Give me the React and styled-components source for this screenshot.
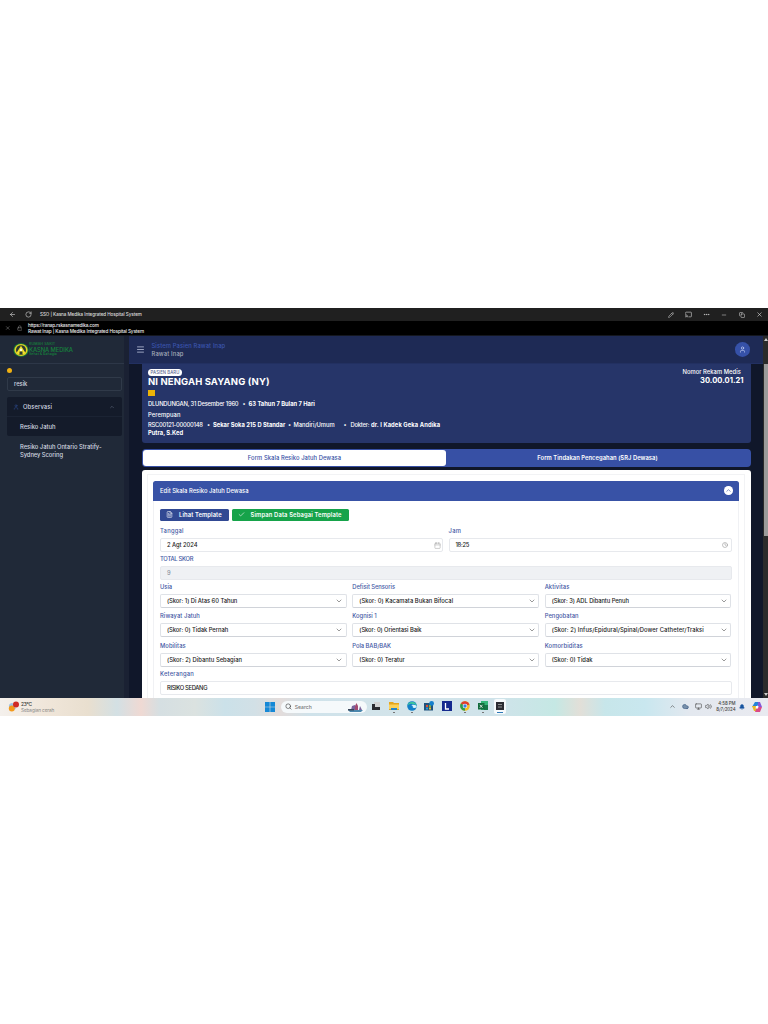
import React from 'react';
import styled, {createGlobalStyle} from "styled-components";
import {
    ArrowLeft, RotateCw, X, Lock, Pencil, Cast, Ellipsis, Minus, Copy, Menu, User, ChevronUp, ChevronDown,
    FileText, Check, Calendar, Clock, Search, Volume2, Monitor, Bell, Cloud
} from "lucide-react";

const GlobalStyle = createGlobalStyle`
* { box-sizing: border-box; }
body {
    margin: 0;
    background: #fff;
    font-family: Inter, "Open Sans", "Liberation Sans", sans-serif;
}
`
const Page = styled.div`
width: 768px;
height: 1024px;
padding-top: 308px;
overflow: hidden;
background: #fff;
`
/* one line of text, $s size, $ls tracking */
const Text = styled.span`
display: block;
flex: none;
white-space: nowrap;
font-size: ${p => p.$s || 5.8}px;
font-weight: ${p => p.$b || 500};
letter-spacing: ${p => p.$ls || 0}px;
line-height: ${p => p.$lh || 8}px;
color: ${p => p.$c || "inherit"};
width: ${p => p.$w ? p.$w + "px" : "auto"};
text-align: ${p => p.$right ? "right" : "left"};
`
const TitleBar = styled.div`
height: 13px;
background: #202020;
color: #ddd;
display: flex;
align-items: center;
justify-content: space-between;
padding-left: 9px;
`
const BarLeft = styled.div`
display: flex;
align-items: center;
gap: 8.5px;
`
const BarRight = styled.div`
display: flex;
align-items: center;
`
const BarSlot = styled.div`
width: 17.6px;
display: flex;
justify-content: center;
`
const UrlBar = styled.div`
height: 15px;
background: #000;
color: #eee;
display: flex;
align-items: center;
padding-left: 5px;
gap: 6px;
border-bottom: 1px solid #14171f;
`
const UrlIcons = styled.div`
display: flex;
gap: 6px;
width: 17px;
color: #999;
`
const AppArea = styled.div`
height: 362px;
display: flex;
background: #10172a;
overflow: hidden;
`
const Sidebar = styled.aside`
width: 129px;
background: #202938;
border-right: 5px solid #1a2133;
color: #d3d8e0;
`
const LogoBox = styled.div`
height: 28px;
display: flex;
align-items: center;
padding-left: 13px;
border-bottom: 1px solid #2d3748;
`
const SideBody = styled.div`
padding: 4px 2px 0 7px;
`
const Dot = styled.div`
width: 5px;
height: 5px;
border-radius: 50%;
background: #f0b012;
`
const SearchInput = styled.div`
height: 14px;
margin-top: 4px;
border: 1px solid #303a49;
border-radius: 2px;
display: flex;
align-items: center;
padding-left: 6px;
`
const MenuGroup = styled.div`
margin-top: 6px;
height: 39px;
border-radius: 2px;
background: #141b2a;
`
const MenuHead = styled.div`
height: 20px;
display: flex;
align-items: center;
padding: 0 7px 0 6px;
gap: 4px;
border-bottom: 1px solid #1b2333;
`
const MenuItem = styled.div`
height: 19px;
display: flex;
align-items: center;
padding-left: 13px;
`
const MenuPlain = styled.div`
padding: 7px 0 0 13px;
`
const Spacer = styled.div`
flex: 1;
`
const Main = styled.main`
width: 634px;
`
const Header = styled.header`
height: 28px;
background: #1e2a55;
display: flex;
align-items: center;
padding: 0 13px 0 6.5px;
gap: 7px;
border-bottom: 1px solid #223061;
`
const Avatar = styled.div`
width: 15.5px;
height: 15px;
border-radius: 50%;
background: #3651a8;
color: #dfe6ff;
display: flex;
align-items: center;
justify-content: center;
`
const Content = styled.div`
padding: 0 12.5px;
`
const Patient = styled.section`
height: 78.5px;
background: #263569;
border-radius: 0 0 3px 3px;
padding: 5px 7px 0 6.5px;
color: #fff;
display: flex;
justify-content: space-between;
`
const Pill = styled.div`
width: 34px;
height: 7px;
border-radius: 4px;
background: #fff;
display: flex;
align-items: center;
justify-content: center;
`
const YellowBox = styled.div`
width: 6.5px;
height: 6.5px;
margin: 1.5px 0 4px;
background: #eab308;
`
const Line = styled.div`
display: flex;
height: ${p => p.$h || 8}px;
`
const Numbers = styled.div`
display: flex;
flex-direction: column;
align-items: flex-end;
margin-top: -1px;
`
const Tabs = styled.div`
height: 18.5px;
margin-top: 6px;
padding: 1.5px;
border-radius: 4px;
background: #3750a5;
display: flex;
`
const Tab = styled.div`
flex: 1;
border-radius: 3px;
display: flex;
align-items: center;
justify-content: center;
background: ${p => p.$on ? "#fff" : "transparent"};
color: ${p => p.$on ? "#3750a5" : "#fff"};
`
const Card = styled.section`
margin-top: 3px;
height: 228px;
background: #fff;
border-radius: 3px 3px 0 0;
padding: 4px 5.5px 0;
`
const CardInner = styled.div`
height: 224px;
border: 1px solid #f2f3f5;
border-bottom: 0;
padding: 5.5px 5.5px 0 5px;
`
const PanelHead = styled.div`
height: 20px;
border-radius: 2.5px 2.5px 0 0;
background: #3852a6;
color: #fff;
display: flex;
align-items: center;
justify-content: space-between;
padding: 0 6px 0 7px;
`
const Round = styled.div`
width: 8.5px;
height: 8.5px;
border-radius: 50%;
background: #fff;
color: #3852a6;
display: flex;
align-items: center;
justify-content: center;
`
const PanelBody = styled.div`
height: 199px;
border: solid #f0f1f4;
border-width: 0 1px;
padding: 8px 6px 0;
`
const Buttons = styled.div`
display: flex;
gap: 3px;
`
const Button = styled.div`
width: ${p => p.$w}px;
height: 12.5px;
border-radius: 1.5px;
background: ${p => p.$bg};
color: #fff;
display: flex;
align-items: center;
padding-left: 6px;
gap: 6px;
`
const Row = styled.div`
display: flex;
gap: 5.5px;
padding-top: ${p => p.$top || 0}px;
`
const Field = styled.div`
flex: 1;
min-width: 0;
`
const Input = styled.div`
height: 14px;
margin-top: 3px;
border: 1px solid ${p => p.$select ? "#dfe2e7" : "#e7e9ed"};
border-bottom-color: ${p => p.$select ? "#d0d3d9" : "#e7e9ed"};
border-radius: 2px;
background: ${p => p.$off ? "#eff1f4" : "#fff"};
color: ${p => p.$off ? "#8a919d" : "#222"};
display: flex;
align-items: center;
justify-content: space-between;
padding: 0 ${p => p.$pr || 2.5}px 0 6px;
`
const Scroll = styled.div`
width: 5px;
background: #2b2b2b;
display: flex;
flex-direction: column;
align-items: center;
justify-content: space-between;
color: #ccc;
padding: 2px 0;
`
const Thumb = styled.div`
width: 3.5px;
height: 172px;
margin: 23px 0 auto 1px;
background: #9b9b9b;
`
const Taskbar = styled.footer`
height: 17.5px;
display: flex;
align-items: center;
background: linear-gradient(90deg, #f4f0ec 0, #f0e6da 45px, #e9dfcf 88px, #d3e0e4 117px, #efd9d3 141px, #d5dfe2 160px, #dbe2e0 195px, #cbe1e9 225px, #d2e0e6 255px, #e3dcdb 280px, #cfe2ea 310px, #d3e4ea 400px, #cfe3ea 500px, #c5e8e4 555px, #e2dfd8 580px, #c7e6ea 605px, #c9e7ef 645px, #e3e8ef 690px, #e9eaf0 768px);
color: #444;
`
const Weather = styled.div`
width: 265px;
display: flex;
align-items: center;
padding-left: 8px;
gap: 2px;
`
const Apps = styled.div`
display: flex;
align-items: center;
gap: 5.7px;
`
const AppSlot = styled.div`
width: 12px;
height: 15px;
border-radius: 2px;
background: ${p => p.$on ? "#f6fafc" : "transparent"};
display: flex;
flex-direction: column;
align-items: center;
justify-content: center;
`
const AppMark = styled.div`
width: ${p => p.$on ? 6 : 2}px;
height: 1px;
margin-top: 1px;
background: ${p => p.$show ? (p.$on ? "#2d78b8" : "#777") : "transparent"};
`
const SearchPill = styled.div`
width: 86px;
height: 12px;
margin-right: -2px;
border-radius: 6px;
background: #f5f9fb;
display: flex;
align-items: center;
padding: 0 3px 0 4px;
gap: 3px;
`
const Tray = styled.div`
margin-left: auto;
padding-right: 6px;
display: flex;
align-items: center;
gap: 3.5px;
`
const TrayIcons = styled.div`
display: flex;
align-items: center;
gap: 6px;
margin-right: -1px;
`
const TrayPair = styled.div`
display: flex;
gap: 3px;
`

const choices = [
    [
        {label: "Usia", value: "(Skor: 1) Di Atas 60 Tahun", ls: -0.04},
        {label: "Defisit Sensoris", lls: -0.05, value: "(Skor: 0) Kacamata Bukan Bifocal", ls: 0.04},
        {label: "Aktivitas", lls: 0.08, value: "(Skor: 3) ADL Dibantu Penuh", ls: -0.07}
    ],
    [
        {label: "Riwayat Jatuh", lls: 0.08, value: "(Skor: 0) Tidak Pernah", ls: -0.04},
        {label: "Kognisi 1", value: "(Skor: 0) Orientasi Baik", ls: -0.07},
        {label: "Pengobatan", lls: 0.06, value: "(Skor: 2) Infus/Epidural/Spinal/Dower Catheter/Traksi", ls: 0.09}
    ],
    [
        {label: "Mobilitas", lls: 0.06, value: "(Skor: 2) Dibantu Sebagian", ls: 0.03},
        {label: "Pola BAB/BAK", lls: -0.05, value: "(Skor: 0) Teratur"},
        {label: "Komorbiditas", lls: 0.12, value: "(Skor: 0) Tidak"}
    ]
]

function Label({children, ls}){
    return <Text $c="#4458a4" $ls={ls}>{children}</Text>
}

function Select({label, lls, value, ls}){
    return(
        <Field>
            <Label ls={lls}>{label}</Label>
            <Input $select>
                <Text $ls={ls}>{value}</Text>
                <ChevronDown size={8} color="#666" />
            </Input>
        </Field>
    )
}

function Logo(){
    return(
        <svg width="16" height="14" viewBox="0 0 16 14">
            <ellipse cx="8" cy="7" rx="7.6" ry="6.7" fill="#16833c" />
            <ellipse cx="8" cy="7" rx="6.6" ry="6" fill="#e6d021" />
            <ellipse cx="8" cy="7" rx="5" ry="4.8" fill="#2c3a33" />
            <path d="M3.4 10 8 2.8l4.600 7.200-1.500 1.200H9.500V8.500h-3v2.700H5z" fill="#f0df2b" />
            <path d="M7.200 5.800h1.600v2.200H7.200z" fill="#fff" />
        </svg>
    )
}

function AppIcon({name}){
    return(
        <svg width="10" height="10" viewBox="0 0 10 10">
            {name === "windows" && <path d="M0 0h4.7v4.7H0zM5.3 0H10v4.7H5.3zM0 5.3h4.7V10H0zM5.3 5.3H10V10H5.3z" fill="#1688d6" />}
            {name === "task" && <g><path d="M3 1h6v6H3z" fill="#d0d2d3" /><path d="M1 3h3v3h5v3H1z" fill="#292b30" /></g>}
            {name === "folder" && <g><path d="M0 1h4l1 1h5v7H0z" fill="#e6a51d" /><path d="M0 3.5h10V8H0z" fill="#fbd25a" /><path d="M2 7h6v2H2z" fill="#2586cb" /></g>}
            {name === "edge" && <g><circle cx="5" cy="5" r="4.8" fill="#1280c8" /><path d="M.4 4.500A4.800 4.800 0 0 1 9.800 5C8 2.500 3 2 .4 4.500z" fill="#42c99a" /><path d="M4.200 4.200C7 3.200 9.800 4 9.700 6c-1 1.300-3.600 1-4 .2.500-.7-.2-2-1.500-2z" fill="#d9f2fb" /></g>}
            {name === "store" && <g><path d="M0 2h9v7.500H0z" fill="#22527c" /><path d="M2 4h2v2H2z" fill="#e4512f" /><path d="M5 4h2v2H5z" fill="#78b943" /><path d="M2 6.500h2v2H2z" fill="#27a0dd" /><path d="M5 6.500h2v2H5z" fill="#efbd31" /><circle cx="7.600" cy="2.400" r="2.400" fill="#1580cc" /></g>}
            {name === "l" && <g><path d="M0 0h10v10H0z" fill="#14298e" /><path d="M3.500 2v6H7" stroke="#fff" strokeWidth="1.300" fill="none" /></g>}
            {name === "chrome" && <g><circle cx="5" cy="5" r="4.800" fill="#f3bd25" /><path d="M5 5 .8 2.600A4.800 4.800 0 0 1 9.500 3.500z" fill="#de3d30" /><path d="M5 5 .8 2.600A4.800 4.800 0 0 0 5 9.800z" fill="#2b9d50" /><circle cx="5" cy="5" r="2.300" fill="#fff" /><circle cx="5" cy="5" r="1.700" fill="#3b7fe0" /></g>}
            {name === "excel" && <g><path d="M3 0h7v9H3z" fill="#35b779" /><path d="M6 4h4v5H6z" fill="#167647" /><path d="M0 2h6.500v6.500H0z" fill="#126c3c" /><path d="m1.800 3.800 2.700 3M4.500 3.800l-2.700 3" stroke="#fff" strokeWidth=".8" /></g>}
            {name === "terminal" && <g><path d="M1 1h8v8H1z" fill="#2b2c32" /><path d="M3 3.500h4M3 6h2M6 5v2" stroke="#aaa" strokeWidth=".8" /></g>}
        </svg>
    )
}

const apps = [
    {name: "task"}, {name: "folder", show: true}, {name: "edge", show: true}, {name: "store"}, {name: "l"},
    {name: "chrome", show: true}, {name: "excel", show: true}, {name: "terminal", show: true, on: true}
]

function Browser(){
    return(
        <>
            <TitleBar>
                <BarLeft>
                    <ArrowLeft size={7} />
                    <RotateCw size={7} />
                    <Text $s={4.6} $ls={-0.07}>SSO | Kasna Medika Integrated Hospital System</Text>
                </BarLeft>
                <BarRight>
                    <BarSlot><Pencil size={6} /></BarSlot>
                    <BarSlot><Cast size={7} /></BarSlot>
                    <BarSlot><Ellipsis size={7} /></BarSlot>
                    <BarSlot><Minus size={6} /></BarSlot>
                    <BarSlot><Copy size={6} /></BarSlot>
                    <BarSlot><X size={7} /></BarSlot>
                </BarRight>
            </TitleBar>
            <UrlBar>
                <UrlIcons><X size={6} /><Lock size={6} /></UrlIcons>
                <div>
                    <Text $s={4.7} $lh={6} $ls={-0.15}>https://ranap.rskasnamedika.com</Text>
                    <Text $s={4.7} $lh={6} $ls={-0.12}>Rawat Inap | Kasna Medika Integrated Hospital System</Text>
                </div>
            </UrlBar>
        </>
    )
}

function SideMenu(){
    return(
        <Sidebar>
            <LogoBox>
                <Logo />
                <div>
                    <Text $s={3.7} $lh={4.5} $c="#16833c" $ls={0.05}>RUMAH SAKIT</Text>
                    <Text $s={5.8} $lh={5.5} $c="#16833c" $ls={-0.05}>KASNA MEDIKA</Text>
                    <Text $s={3.6} $lh={4.5} $c="#16833c">Sehat &amp; Bahagia</Text>
                </div>
            </LogoBox>
            <SideBody>
                <Dot />
                <SearchInput><Text>resik</Text></SearchInput>
                <MenuGroup>
                    <MenuHead>
                        <User size={6} color="#30509a" />
                        <Text $ls={0.1}>Observasi</Text>
                        <Spacer />
                        <ChevronUp size={6} color="#667085" />
                    </MenuHead>
                    <MenuItem><Text>Resiko Jatuh</Text></MenuItem>
                </MenuGroup>
                <MenuPlain>
                    <Text>Resiko Jatuh Ontario Stratify-</Text>
                    <Text $ls={-0.05}>Sydney Scoring</Text>
                </MenuPlain>
            </SideBody>
        </Sidebar>
    )
}

function PatientInfo(){
    return(
        <Patient>
            <div>
                <Pill><Text $s={4.3} $c="#5c6690" $lh={6} $ls={0.05}>PASIEN BARU</Text></Pill>
                <Text $s={9.5} $b={700} $lh={12} $ls={0.1}>NI NENGAH SAYANG (NY)</Text>
                <YellowBox />
                <Line $h={10.7}>
                    <Text $w={94.5} $ls={-0.2}>DLUNDUNGAN, 31 Desember 1960</Text>
                    <Text $w={6}>•</Text>
                    <Text $b={700}>63 Tahun 7 Bulan 7 Hari</Text>
                </Line>
                <Line $h={10.5}><Text $ls={0.1}>Perempuan</Text></Line>
                <Line $h={7.5}>
                    <Text $w={59} $ls={-0.25}>RSC00121-00000148</Text>
                    <Text $w={6}>•</Text>
                    <Text $b={700} $w={75}>Sekar Soka 215 D Standar</Text>
                    <Text $w={5.5}>•</Text>
                    <Text $w={50}>Mandiri/Umum</Text>
                    <Text $w={7}>•</Text>
                    <Text $w={20.5} $ls={-0.2}>Dokter:</Text>
                    <Text $b={700} $ls={0.1}>dr. I Kadek Geka Andika</Text>
                </Line>
                <Text $b={700}>Putra, S.Ked</Text>
            </div>
            <Numbers>
                <Text $w={61} $ls={0.05}>Nomor Rekam Medis</Text>
                <Text $s={7.6} $b={700} $lh={10}>30.00.01.21</Text>
            </Numbers>
        </Patient>
    )
}

function Form(){
    return(
        <Card>
            <CardInner>
                <PanelHead>
                    <Text $ls={0.03}>Edit Skala Resiko Jatuh Dewasa</Text>
                    <Round><ChevronUp size={7} /></Round>
                </PanelHead>
                <PanelBody>
                    <Buttons>
                        <Button $w={68.5} $bg="#314993">
                            <FileText size={7} /><Text $b={600} $ls={0.12}>Lihat Template</Text>
                        </Button>
                        <Button $w={117} $bg="#16a34a">
                            <Check size={7} /><Text $b={600} $ls={0.15}>Simpan Data Sebagai Template</Text>
                        </Button>
                    </Buttons>
                    <Row $top={6}>
                        <Field>
                            <Label ls={0.25}>Tanggal</Label>
                            <Input $pr={1.5}><Text $ls={-0.05}>2 Agt 2024</Text><Calendar size={7} color="#aaa" /></Input>
                        </Field>
                        <Field>
                            <Label ls={0.3}>Jam</Label>
                            <Input><Text $ls={-0.3}>18:25</Text><Clock size={6} color="#888" /></Input>
                        </Field>
                    </Row>
                    <Row $top={3}>
                        <Field>
                            <Label ls={-0.25}>TOTAL SKOR</Label>
                            <Input $off><Text>9</Text></Input>
                        </Field>
                    </Row>
                    {choices.map((row, index) =>
                        <Row key={index} $top={index === 0 ? 3 : 4.4}>
                            {row.map((item) => <Select key={item.label} {...item} />)}
                        </Row>
                    )}
                    <Row $top={3}>
                        <Field>
                            <Label ls={0.2}>Keterangan</Label>
                            <Input><Text $ls={-0.33}>RISIKO SEDANG</Text></Input>
                        </Field>
                    </Row>
                </PanelBody>
            </CardInner>
        </Card>
    )
}

function TaskbarRow(){
    return(
        <Taskbar>
            <Weather>
                <svg width="11" height="12" viewBox="0 0 11 12">
                    <path d="M1 6a3 3 0 0 1 5-3l2 5-5 1z" fill="#9fc3e6" />
                    <circle cx="3.800" cy="7.500" r="3" fill="#f39a1c" />
                    <circle cx="8" cy="3.500" r="3" fill="#cf2a25" />
                </svg>
                <div>
                    <Text $s={4.8} $lh={6} $c="#333" $ls={-0.2}>23°C</Text>
                    <Text $s={4.7} $lh={6} $b={400} $c="#888" $ls={-0.1}>Sebagian cerah</Text>
                </div>
            </Weather>
            <Apps>
                <AppIcon name="windows" />
                <SearchPill>
                    <Search size={7} color="#333" />
                    <Text $s={5.1} $c="#777">Search</Text>
                    <Spacer />
                    <svg width="17" height="10" viewBox="0 0 17 10">
                        <path d="M1 8h15l-2 2H3z" fill="#4b87ad" />
                        <path d="M4 8 5 4l3-1 1 5zM12 8l1-4 2 4z" fill="#79649c" />
                        <path d="M8 8V4l1.500-3L11 4v4z" fill="#a44b71" />
                        <path d="M1 7h6v1.500H1z" fill="#394659" />
                    </svg>
                </SearchPill>
                {apps.map((app) =>
                    <AppSlot key={app.name} $on={app.on}>
                        <AppIcon name={app.name} />
                        <AppMark $show={app.show} $on={app.on} />
                    </AppSlot>
                )}
            </Apps>
            <Tray>
                <TrayIcons>
                    <ChevronUp size={7} />
                    <Cloud size={7} color="#33557f" fill="#7790aa" />
                    <TrayPair>
                        <Monitor size={7} />
                        <Volume2 size={7} />
                    </TrayPair>
                </TrayIcons>
                <div>
                    <Text $s={4.4} $lh={6} $w={21} $right $ls={-0.05}>4:58 PM</Text>
                    <Text $s={4.4} $lh={6} $w={21} $right $ls={-0.05}>8/7/2024</Text>
                </div>
                <Bell size={6} color="#1754a0" fill="#1754a0" />
                <Spacer />
                <svg width="10" height="10" viewBox="0 0 10 10">
                    <path d="M3 0h4L5 5H0z" fill="#2583d9" />
                    <path d="M6 0h2l2 5H6z" fill="#8756d6" />
                    <path d="M0 4h4l1 5H2z" fill="#e9b92b" />
                    <path d="M5 5h5L8 10H3z" fill="#db4a86" />
                    <path d="M4 4h2.500L6 6.500H3.500z" fill="#fff" />
                </svg>
            </Tray>
        </Taskbar>
    )
}

export default function App(){
    return(
        <Page>
            <GlobalStyle />
            <Browser />
            <AppArea>
                <SideMenu />
                <Main>
                    <Header>
                        <Menu size={9} color="#c3cae0" />
                        <div>
                            <Text $lh={7.5} $c="#3b55ae" $ls={0.12}>Sistem Pasien Rawat Inap</Text>
                            <Text $lh={7.5} $c="#a5abb9" $ls={0.15}>Rawat Inap</Text>
                        </div>
                        <Spacer />
                        <Avatar><User size={7} /></Avatar>
                    </Header>
                    <Content>
                        <PatientInfo />
                        <Tabs>
                            <Tab $on><Text $ls={0.07}>Form Skala Resiko Jatuh Dewasa</Text></Tab>
                            <Tab><Text $b={600} $ls={0.05}>Form Tindakan Pencegahan (SRJ Dewasa)</Text></Tab>
                        </Tabs>
                        <Form />
                    </Content>
                </Main>
                <Scroll>
                    <svg width="4" height="3" viewBox="0 0 4 3"><path d="M0 3 2 0l2 3z" fill="currentColor" /></svg>
                    <Thumb />
                    <svg width="4" height="3" viewBox="0 0 4 3"><path d="M0 0h4L2 3z" fill="currentColor" /></svg>
                </Scroll>
            </AppArea>
            <TaskbarRow />
        </Page>
    )
}
